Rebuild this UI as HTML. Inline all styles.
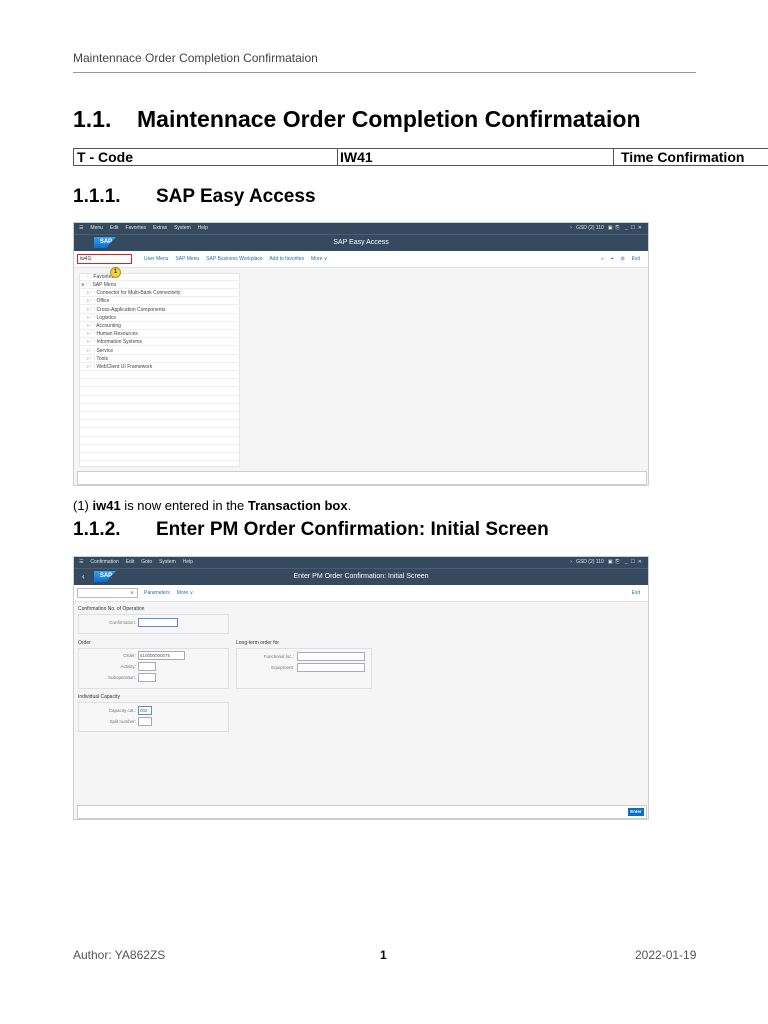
<!DOCTYPE html>
<html><head><meta charset="utf-8"><style>
*{margin:0;padding:0;box-sizing:border-box}
body{width:768px;height:1024px;background:#fff;position:relative;font-family:"Liberation Sans",Arial,sans-serif;color:#000;overflow:hidden}
.a{position:absolute}
.h1{font-size:23px;font-weight:bold}
.h2{font-size:19px;font-weight:bold}
.shot{position:absolute;left:73px;width:576px;height:264px;background:#f5f5f5;border:1px solid #c8d0d8;overflow:hidden;font-size:5px;color:#556}
.menu{position:absolute;left:0;top:0;width:100%;height:11px;background:#354a5f;color:#dfe6ec;font-size:5px;line-height:11px}
.title{position:absolute;left:0;top:11px;width:100%;height:17px;background:#354a5f;border-top:1px solid #4a5e72;color:#fff;font-size:7px;line-height:16px;text-align:center}
.tb{position:absolute;left:0;top:28px;width:100%;height:17px;background:#fff;border-bottom:1px solid #e2e2e2;color:#2a6bb0;font-size:5px;line-height:17px}
.logo{position:absolute;top:2px;width:22px;height:11px;background:linear-gradient(#3aa1e8,#0a6ed1);clip-path:polygon(0 0,100% 0,55% 100%,0 100%);color:#fff;font-weight:bold;font-size:6px;line-height:11px;padding-left:2px}
.status{position:absolute;left:3px;top:248px;width:570px;height:14px;background:#fff;border:1px solid #ccc}
.row{position:absolute;left:5px;width:161px;height:8.2px;border-bottom:1px solid #eee;line-height:8px;font-size:5px;color:#444}
.grp{position:absolute;border:1px solid #e0e0e0;background:#f7f7f7}
.lbl{position:absolute;font-size:5px;color:#333}
.fl{position:absolute;font-size:4.5px;color:#777;text-align:right}
.inp{position:absolute;background:#fff;border:1px solid #aab;height:9px;font-size:4.5px;line-height:8px;padding-left:1px;color:#555}
</style></head><body>
<div class="a" style="left:73px;top:51px;font-size:12px;color:#444">Maintennace Order Completion Confirmataion</div>
<div class="a" style="left:73px;top:72px;width:623px;height:1px;background:#999"></div>
<div class="a h1" style="left:73px;top:106px">1.1.</div>
<div class="a h1" style="left:137px;top:106px">Maintennace Order Completion Confirmataion</div>
<div class="a" style="left:73px;top:148px;width:700px;height:18px;background:#fff;border:1px solid #555;font-size:14px;font-weight:bold;line-height:16px">
<span class="a" style="left:3px">T - Code</span>
<span class="a" style="left:263px;top:0;width:1px;height:16px;background:#555"></span>
<span class="a" style="left:266px">IW41</span>
<span class="a" style="left:539px;top:0;width:1px;height:16px;background:#555"></span>
<span class="a" style="left:547px">Time Confirmation</span>
</div>
<div class="a h2" style="left:73px;top:186px">1.1.1.</div>
<div class="a h2" style="left:156px;top:186px">SAP Easy Access</div>

<div class="shot" style="top:222px">
<div class="menu"><span style="margin-left:5px">☰&nbsp;&nbsp;&nbsp;&nbsp; Menu&nbsp;&nbsp;&nbsp;&nbsp; Edit&nbsp;&nbsp;&nbsp;&nbsp; Favorites&nbsp;&nbsp;&nbsp;&nbsp; Extras&nbsp;&nbsp;&nbsp;&nbsp; System&nbsp;&nbsp;&nbsp;&nbsp; Help</span><span style="position:absolute;right:6px">›&nbsp;&nbsp; GSD (2) 110&nbsp;&nbsp; ▣&nbsp; ⎘&nbsp;&nbsp;&nbsp; _&nbsp; ☐&nbsp; ✕</span></div>
<div class="title"><div class="logo" style="left:20px">SAP</div>SAP Easy Access</div>
<div class="tb"><span style="margin-left:70px">User Menu&nbsp;&nbsp;&nbsp;&nbsp; SAP Menu&nbsp;&nbsp;&nbsp;&nbsp; SAP Business Workplace&nbsp;&nbsp;&nbsp;&nbsp; Add to favorites&nbsp;&nbsp;&nbsp;&nbsp; More ∨</span><span style="position:absolute;right:8px">⌕&nbsp;&nbsp;&nbsp;&nbsp; ⌖&nbsp;&nbsp;&nbsp;&nbsp; ⚙&nbsp;&nbsp;&nbsp;&nbsp; Exit</span></div>
<div class="a" style="left:3px;top:31px;width:55px;height:10px;border:1.5px solid #d22;background:#fff;font-size:5px;line-height:8px;padding-left:2px;color:#333">iw41|</div>
<div class="a" style="left:5px;top:50px;width:161px;height:194px;background:#fff;border:1px solid #e4e4e4"></div>
<div class="row" style="top:50px;padding-left:8px">🗀 Favorites</div>
<div class="row" style="top:58px;padding-left:2px">∨ 🗀 SAP Menu</div>
<div class="row" style="top:66px;padding-left:8px">› 🗀 Connector for Multi-Bank Connectivity</div>
<div class="row" style="top:74px;padding-left:8px">› 🗀 Office</div>
<div class="row" style="top:83px;padding-left:8px">› 🗀 Cross-Application Components</div>
<div class="row" style="top:91px;padding-left:8px">› 🗀 Logistics</div>
<div class="row" style="top:99px;padding-left:8px">› 🗀 Accounting</div>
<div class="row" style="top:107px;padding-left:8px">› 🗀 Human Resources</div>
<div class="row" style="top:115px;padding-left:8px">› 🗀 Information Systems</div>
<div class="row" style="top:124px;padding-left:8px">› 🗀 Service</div>
<div class="row" style="top:132px;padding-left:8px">› 🗀 Tools</div>
<div class="row" style="top:140px;padding-left:8px">› 🗀 WebClient UI Framework</div>
<div class="row" style="top:148px"></div><div class="row" style="top:156px"></div><div class="row" style="top:165px"></div><div class="row" style="top:173px"></div><div class="row" style="top:181px"></div><div class="row" style="top:189px"></div><div class="row" style="top:197px"></div><div class="row" style="top:206px"></div><div class="row" style="top:214px"></div><div class="row" style="top:222px"></div><div class="row" style="top:230px"></div>
<div class="a" style="left:36px;top:44px;width:11px;height:11px;border-radius:50%;background:#f5d33a;border:1px solid #b82;font-size:6px;font-weight:bold;text-align:center;line-height:9px;color:#333">1</div>
<div class="status"></div>
</div>

<div class="a" style="left:73px;top:498px;font-size:13px">(1) <b>iw41</b> is now entered in the <b>Transaction box</b>.</div>
<div class="a h2" style="left:73px;top:519px">1.1.2.</div>
<div class="a h2" style="left:156px;top:519px">Enter PM Order Confirmation: Initial Screen</div>

<div class="shot" style="top:556px">
<div class="menu"><span style="margin-left:5px">☰&nbsp;&nbsp;&nbsp;&nbsp; Confirmation&nbsp;&nbsp;&nbsp;&nbsp; Edit&nbsp;&nbsp;&nbsp;&nbsp; Goto&nbsp;&nbsp;&nbsp;&nbsp; System&nbsp;&nbsp;&nbsp;&nbsp; Help</span><span style="position:absolute;right:6px">›&nbsp;&nbsp; GSD (2) 110&nbsp;&nbsp; ▣&nbsp; ⎘&nbsp;&nbsp;&nbsp; _&nbsp; ☐&nbsp; ✕</span></div>
<div class="title"><span style="position:absolute;left:8px;font-size:8px">‹</span><div class="logo" style="left:20px">SAP</div>Enter PM Order Confirmation: Initial Screen</div>
<div class="tb"><span style="margin-left:70px">Parameters&nbsp;&nbsp;&nbsp;&nbsp; More ∨</span><span style="position:absolute;right:8px">Exit</span></div>
<div class="a" style="left:3px;top:31px;width:61px;height:10px;background:#fff;border:1px solid #bbb;font-size:5px;text-align:right;padding-right:3px;line-height:8px">∨</div>
<div class="lbl" style="left:4px;top:49px">Confirmation No. of Operation</div>
<div class="grp" style="left:4px;top:57px;width:151px;height:20px"></div>
<div class="fl" style="left:20px;top:63px;width:42px">Confirmation:</div>
<div class="inp" style="left:64px;top:61px;width:40px;border-color:#5a8ed0"></div>
<div class="lbl" style="left:4px;top:83px">Order</div>
<div class="grp" style="left:4px;top:91px;width:151px;height:41px"></div>
<div class="fl" style="left:20px;top:96px;width:42px">Order:</div>
<div class="inp" style="left:64px;top:94px;width:47px">510000000075</div>
<div class="fl" style="left:20px;top:107px;width:42px">Activity:</div>
<div class="inp" style="left:64px;top:105px;width:18px"></div>
<div class="fl" style="left:10px;top:118px;width:52px">Suboperation:</div>
<div class="inp" style="left:64px;top:116px;width:18px"></div>
<div class="lbl" style="left:162px;top:83px">Long-term order for</div>
<div class="grp" style="left:162px;top:91px;width:136px;height:41px"></div>
<div class="fl" style="left:170px;top:97px;width:50px">Functional loc.:</div>
<div class="inp" style="left:223px;top:95px;width:68px"></div>
<div class="fl" style="left:170px;top:108px;width:50px">Equipment:</div>
<div class="inp" style="left:223px;top:106px;width:68px"></div>
<div class="lbl" style="left:4px;top:137px">Individual Capacity</div>
<div class="grp" style="left:4px;top:145px;width:151px;height:30px"></div>
<div class="fl" style="left:10px;top:151px;width:52px">Capacity cat.:</div>
<div class="inp" style="left:64px;top:149px;width:14px;border-color:#5a8ed0">002</div>
<div class="fl" style="left:10px;top:162px;width:52px">Split number:</div>
<div class="inp" style="left:64px;top:160px;width:14px"></div>
<div class="status"><div class="a" style="right:2px;top:2px;width:16px;height:8px;background:#0a6ed1;color:#fff;font-size:4.5px;text-align:center;line-height:8px;font-weight:bold">Enter</div></div>
</div>

<div class="a" style="left:73px;top:948px;font-size:12px;color:#555">Author: YA862ZS</div>
<div class="a" style="left:380px;top:948px;font-size:12px;font-weight:bold">1</div>
<div class="a" style="left:635px;top:948px;font-size:12px;color:#555">2022-01-19</div>
</body></html>
